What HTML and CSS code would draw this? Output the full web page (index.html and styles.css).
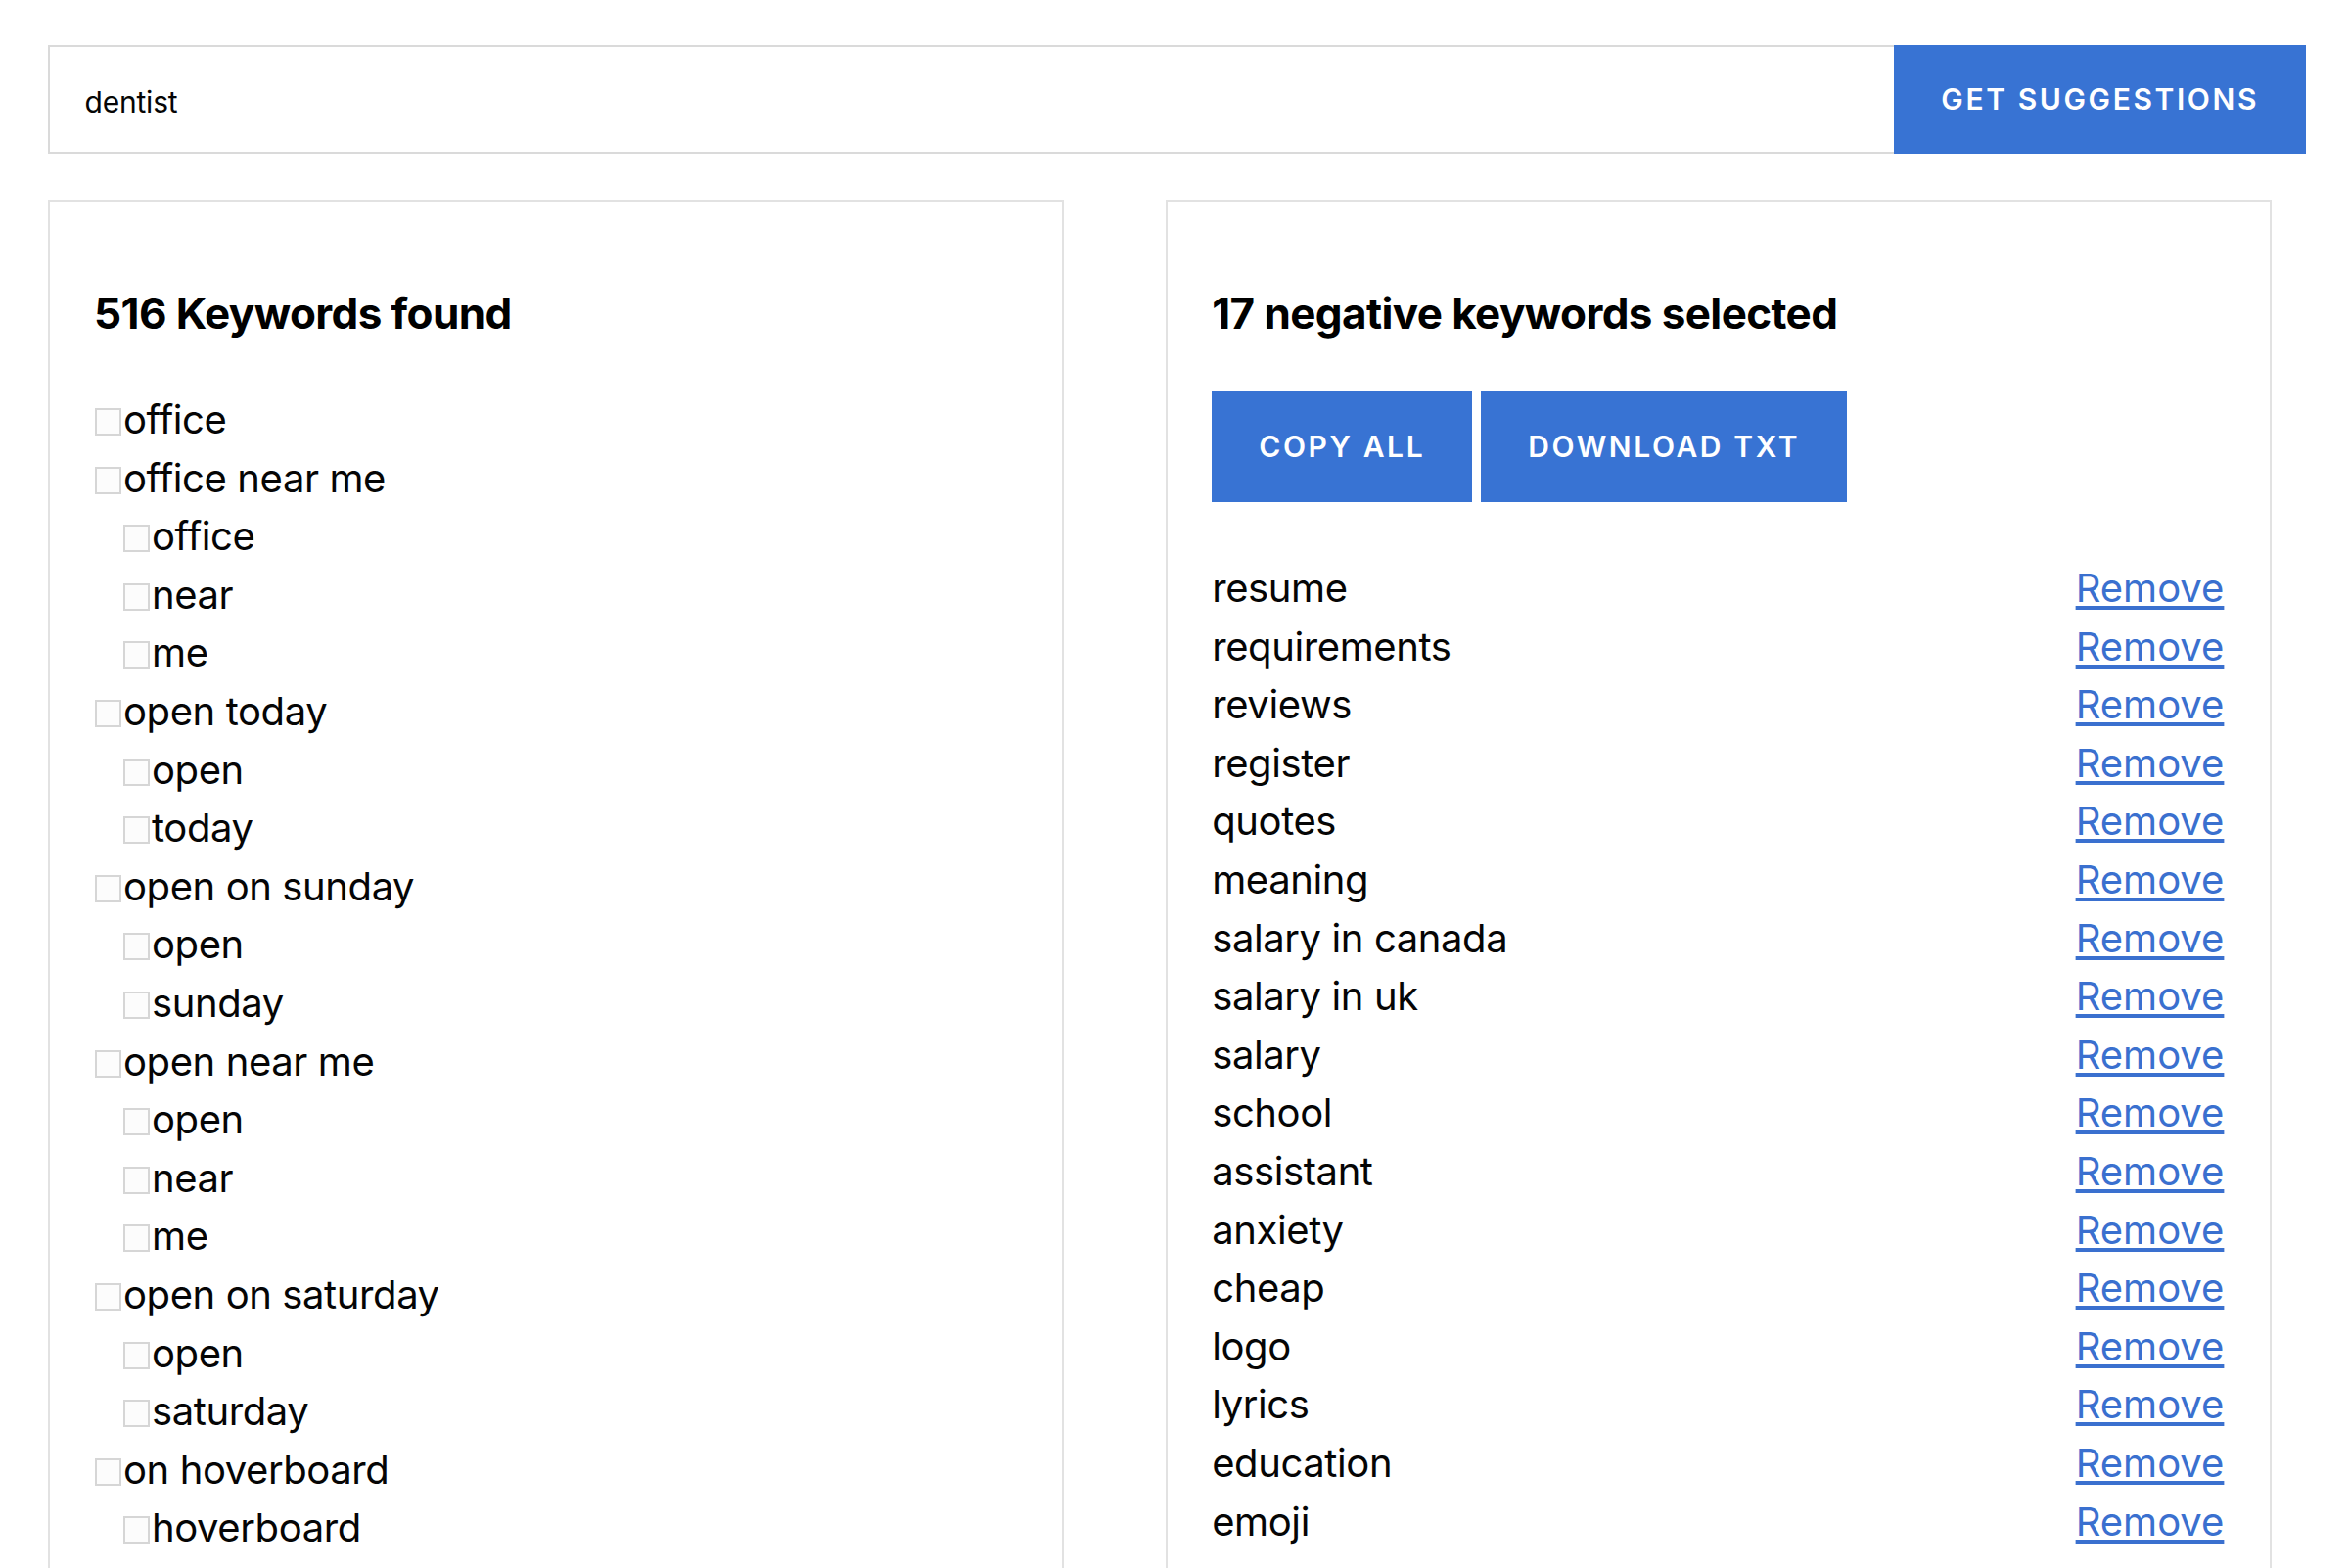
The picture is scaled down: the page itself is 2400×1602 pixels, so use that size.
FILE: index.html
```
<!DOCTYPE html>
<html lang="en">
<head>
<meta charset="utf-8">
<title>Negative keyword suggestions</title>
<link rel="stylesheet" href="styles.css">
</head>
<body>
<div class="page">
  <form class="search" onsubmit="return false">
    <input class="search-input" type="text" value="dentist" aria-label="Keyword">
    <button class="btn btn-search" type="submit">GET SUGGESTIONS</button>
  </form>

  <div class="columns">
    <section class="panel panel-keywords">
      <h2 class="panel-title">516 Keywords found</h2>
      <ul class="tree">
        <li><label class="kw"><span class="cb"></span>office</label></li>
        <li><label class="kw"><span class="cb"></span>office near me</label>
          <ul class="tree sub">
            <li><label class="kw"><span class="cb"></span>office</label></li>
            <li><label class="kw"><span class="cb"></span>near</label></li>
            <li><label class="kw"><span class="cb"></span>me</label></li>
          </ul>
        </li>
        <li><label class="kw"><span class="cb"></span>open today</label>
          <ul class="tree sub">
            <li><label class="kw"><span class="cb"></span>open</label></li>
            <li><label class="kw"><span class="cb"></span>today</label></li>
          </ul>
        </li>
        <li><label class="kw"><span class="cb"></span>open on sunday</label>
          <ul class="tree sub">
            <li><label class="kw"><span class="cb"></span>open</label></li>
            <li><label class="kw"><span class="cb"></span>sunday</label></li>
          </ul>
        </li>
        <li><label class="kw"><span class="cb"></span>open near me</label>
          <ul class="tree sub">
            <li><label class="kw"><span class="cb"></span>open</label></li>
            <li><label class="kw"><span class="cb"></span>near</label></li>
            <li><label class="kw"><span class="cb"></span>me</label></li>
          </ul>
        </li>
        <li><label class="kw"><span class="cb"></span>open on saturday</label>
          <ul class="tree sub">
            <li><label class="kw"><span class="cb"></span>open</label></li>
            <li><label class="kw"><span class="cb"></span>saturday</label></li>
          </ul>
        </li>
        <li><label class="kw"><span class="cb"></span>on hoverboard</label>
          <ul class="tree sub">
            <li><label class="kw"><span class="cb"></span>hoverboard</label></li>
          </ul>
        </li>
      </ul>
    </section>

    <section class="panel panel-negative">
      <h2 class="panel-title">17 negative keywords selected</h2>
      <div class="actions">
        <button class="btn btn-action" type="button">COPY ALL</button>
        <button class="btn btn-action" type="button">DOWNLOAD TXT</button>
      </div>
      <ul class="neg-list">
        <li><span>resume</span><a href="#">Remove</a></li>
        <li><span>requirements</span><a href="#">Remove</a></li>
        <li><span>reviews</span><a href="#">Remove</a></li>
        <li><span>register</span><a href="#">Remove</a></li>
        <li><span>quotes</span><a href="#">Remove</a></li>
        <li><span>meaning</span><a href="#">Remove</a></li>
        <li><span>salary in canada</span><a href="#">Remove</a></li>
        <li><span>salary in uk</span><a href="#">Remove</a></li>
        <li><span>salary</span><a href="#">Remove</a></li>
        <li><span>school</span><a href="#">Remove</a></li>
        <li><span>assistant</span><a href="#">Remove</a></li>
        <li><span>anxiety</span><a href="#">Remove</a></li>
        <li><span>cheap</span><a href="#">Remove</a></li>
        <li><span>logo</span><a href="#">Remove</a></li>
        <li><span>lyrics</span><a href="#">Remove</a></li>
        <li><span>education</span><a href="#">Remove</a></li>
        <li><span>emoji</span><a href="#">Remove</a></li>
      </ul>
    </section>
  </div>
</div>
</body>
</html>
```

FILE: styles.css
```
* {
  box-sizing: border-box;
}

html, body {
  margin: 0;
  background: #ffffff;
}

body {
  font-family: Inter, "Noto Sans", "Liberation Sans", sans-serif;
  color: #050505;
}

.page {
  padding: 46px 44px 0 48.5px;
}

/* search bar */
.search {
  display: flex;
  height: 111px;
  margin: 0;
}

.search-input {
  flex: 1;
  min-width: 0;
  border: 2px solid #dadada;
  border-right: none;
  padding: 4px 36px 0;
  font-family: Inter, "Noto Sans", sans-serif;
  font-size: 30px;
  letter-spacing: -0.2px;
  color: #050505;
  background: #fff;
  outline: none;
  border-radius: 0;
}

.btn {
  background: #3873d3;
  color: #ffffff;
  border: none;
  border-radius: 0;
  font-family: Inter, "Noto Sans", sans-serif;
  font-weight: 600;
  font-size: 30px;
  letter-spacing: 2.6px;
  line-height: 45px;
  padding: 0 48px;
  cursor: pointer;
}

/* columns */
.columns {
  display: flex;
  align-items: flex-start;
  margin-top: 47px;
}

.panel {
  border: 2px solid #e2e2e2;
  padding: 88px 47px 48px 45.5px;
}

.panel-keywords {
  width: 45%;
}

.panel-negative {
  width: 49%;
  margin-left: 4.5%;
}

.panel-title {
  margin: 0 0 52px;
  font-size: 44px;
  line-height: 53px;
  font-weight: 700;
  letter-spacing: -0.6px;
  color: #000;
}

/* keyword tree */
.tree {
  list-style: none;
  margin: 0;
  padding: 0;
  font-size: 40px;
  line-height: 59.6px;
  letter-spacing: -0.4px;
}

.tree.sub {
  padding-left: 29px;
}

.kw {
  display: block;
  white-space: nowrap;
}

.cb {
  display: inline-block;
  width: 27px;
  height: 28px;
  margin: 0 2px 0 1px;
  border: 2px solid #d6d6d6;
  background: #fcfcfc;
  vertical-align: -2px;
}

/* negative keywords */
.actions {
  display: flex;
  gap: 9px;
  margin-bottom: 58px;
}

.btn-action {
  height: 114px;
}

.neg-list {
  list-style: none;
  margin: 0;
  padding: 0;
  font-size: 40px;
  line-height: 59.6px;
  letter-spacing: -0.4px;
}

.neg-list li {
  display: flex;
  justify-content: space-between;
  align-items: baseline;
}

.neg-list a {
  color: #3a70cf;
  letter-spacing: 0;
  text-decoration: underline;
  text-decoration-thickness: 4px;
  text-underline-offset: 4px;
}
```
